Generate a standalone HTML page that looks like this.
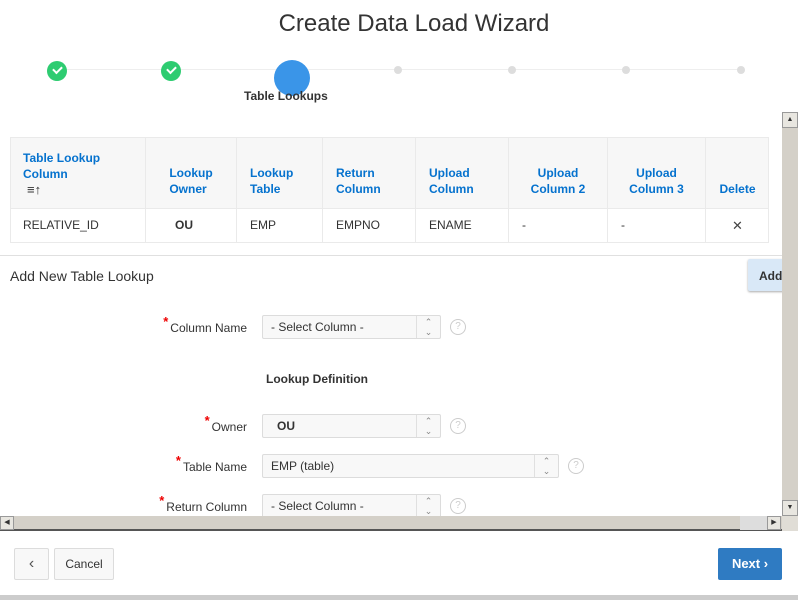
<!DOCTYPE html>
<html><head><style>
*{box-sizing:border-box;margin:0;padding:0}
body{width:798px;height:600px;position:relative;overflow:hidden;background:#fff;font-family:"Liberation Sans",sans-serif;font-size:12px;color:#333}
.a{position:absolute}
.dot{position:absolute;width:8px;height:8px;border-radius:50%;background:#ddd;top:66px}
.chk{position:absolute;width:20px;height:20px;border-radius:50%;background:#2ecc71;top:61px}
.chk:after{content:"";position:absolute;left:6px;top:5px;width:7px;height:4px;border-left:2px solid #fff;border-bottom:2px solid #fff;transform:rotate(-45deg)}
.th{position:absolute;top:137px;height:72px;color:#0572ce;font-weight:bold;font-size:12px;line-height:16px;border-right:1px solid #eaeaea;padding:0 13px;display:flex;align-items:flex-end;padding-bottom:12px}
.td{position:absolute;top:209px;height:33px;line-height:33px;border-right:1px solid #eaeaea;padding-left:13px;font-size:12px}
.lbl{position:absolute;font-size:12px;text-align:right;color:#333}
.lbl b{color:#e00;font-size:13px;position:relative;top:-6px;margin-right:2px}
.sel{position:absolute;height:24px;border:1px solid #dcdcdc;border-radius:2px;background:#f8f8f8;padding-left:8px;line-height:22px;font-size:12px}
.sel i{position:absolute;right:0;top:0;width:24px;height:22px;border-left:1px solid #e0e0e0;font-style:normal;color:#888;font-size:9px;text-align:center;line-height:10px;padding-top:1px}
.q{position:absolute;width:16px;height:16px;border:1px solid #ccc;border-radius:50%;color:#ccc;font-size:10px;text-align:center;line-height:14px}
</style></head><body>
<div class="a" style="left:0;width:798px;top:10px;text-align:center;font-size:24px;color:#333;padding-left:30px">Create Data Load Wizard</div>
<div class="a" style="left:57px;width:684px;top:69px;height:1px;background:#eee"></div>
<div class="chk" style="left:47px"></div>
<div class="chk" style="left:161px"></div>
<div class="a" style="left:274px;top:60px;width:36px;height:36px;border-radius:50%;background:#3a95e8"></div>
<div class="a" style="left:244px;top:89px;font-weight:bold;font-size:12px;color:#333">Table Lookups</div>
<div class="dot" style="left:394px"></div><div class="dot" style="left:508px"></div><div class="dot" style="left:622px"></div><div class="dot" style="left:737px"></div>

<div class="a" style="left:10px;top:137px;width:759px;height:72px;background:#f7f7f7;border:1px solid #eaeaea"></div>
<div class="a" style="left:10px;top:209px;width:759px;height:34px;border:1px solid #eaeaea;border-top:none"></div>
<div class="th" style="left:10px;width:136px;padding-bottom:0;align-items:flex-start;padding-top:13px;display:block">Table Lookup<br>Column<div style="color:#333;font-weight:normal;font-size:13px;padding-left:4px;line-height:16px">≡↑</div></div>
<div class="th" style="left:146px;width:91px;justify-content:center">Lookup<br>Owner</div>
<div class="th" style="left:237px;width:86px">Lookup<br>Table</div>
<div class="th" style="left:323px;width:93px">Return<br>Column</div>
<div class="th" style="left:416px;width:93px">Upload<br>Column</div>
<div class="th" style="left:509px;width:99px;justify-content:center;text-align:center">Upload<br>Column 2</div>
<div class="th" style="left:608px;width:98px;justify-content:center;text-align:center">Upload<br>Column 3</div>
<div class="th" style="left:706px;width:63px;justify-content:center;border:none">Delete</div>
<div class="td" style="left:10px;width:136px">RELATIVE_ID</div>
<div class="td" style="left:146px;width:91px;padding-left:29px;font-weight:bold">OU</div>
<div class="td" style="left:237px;width:86px">EMP</div>
<div class="td" style="left:323px;width:93px">EMPNO</div>
<div class="td" style="left:416px;width:93px">ENAME</div>
<div class="td" style="left:509px;width:99px">-</div>
<div class="td" style="left:608px;width:98px">-</div>
<div class="td" style="left:706px;width:63px;border:none;text-align:center;padding:0;font-size:13px;color:#444">✕</div>

<div class="a" style="left:0;top:255px;width:782px;height:1px;background:#e0e0e0"></div>
<div class="a" style="left:10px;top:268px;font-size:14px;color:#333">Add New Table Lookup</div>
<div class="a" style="left:748px;top:259px;width:40px;height:32px;background:#d9e8f7;border-radius:2px;font-weight:bold;padding:10px 0 0 11px;font-size:12px;box-shadow:0 1px 2px #aaa">Add</div>

<div class="lbl" style="left:100px;width:147px;top:320px"><b>*</b>Column Name</div>
<div class="sel" style="left:262px;top:315px;width:179px">- Select Column -<i>⌃<br>⌄</i></div>
<div class="q" style="left:450px;top:319px">?</div>
<div class="a" style="left:266px;top:372px;font-weight:bold;font-size:12px">Lookup Definition</div>
<div class="lbl" style="left:100px;width:147px;top:419px"><b>*</b>Owner</div>
<div class="sel" style="left:262px;top:414px;width:179px;font-weight:bold;padding-left:14px">OU<i style="font-weight:normal">⌃<br>⌄</i></div>
<div class="q" style="left:450px;top:418px">?</div>
<div class="lbl" style="left:100px;width:147px;top:459px"><b>*</b>Table Name</div>
<div class="sel" style="left:262px;top:454px;width:297px">EMP (table)<i>⌃<br>⌄</i></div>
<div class="q" style="left:568px;top:458px">?</div>
<div class="lbl" style="left:100px;width:147px;top:499px"><b>*</b>Return Column</div>
<div class="sel" style="left:262px;top:494px;width:179px">- Select Column -<i>⌃<br>⌄</i></div>
<div class="q" style="left:450px;top:498px">?</div>

<div class="a" style="left:782px;top:112px;width:16px;height:404px;background:#d4d0c8"></div>
<div class="a" style="left:782px;top:112px;width:16px;height:16px;background:#e8e6e0;border:1px solid #999;font-size:7px;text-align:center;line-height:14px">▲</div>
<div class="a" style="left:782px;top:500px;width:16px;height:16px;background:#e8e6e0;border:1px solid #999;font-size:7px;text-align:center;line-height:14px">▼</div>
<div class="a" style="left:0;top:516px;width:782px;height:15px;background:#d4d0c8;border-bottom:2px solid #555"></div>
<div class="a" style="left:0;top:516px;width:14px;height:14px;background:#e8e6e0;border:1px solid #999;font-size:7px;text-align:center;line-height:12px">◀</div>
<div class="a" style="left:740px;top:516px;width:28px;height:14px;background:#ddd"></div>
<div class="a" style="left:767px;top:516px;width:14px;height:14px;background:#e8e6e0;border:1px solid #999;font-size:7px;text-align:center;line-height:12px">▶</div>
<div class="a" style="left:782px;top:516px;width:16px;height:15px;background:#e0ddd6"></div>

<div class="a" style="left:14px;top:548px;width:35px;height:32px;border:1px solid #dcdcdc;border-radius:2px;background:#f8f8f8;text-align:center;line-height:30px;font-size:16px;color:#555">‹</div>
<div class="a" style="left:54px;top:548px;width:60px;height:32px;border:1px solid #dcdcdc;border-radius:2px;background:#f8f8f8;text-align:center;line-height:30px;font-size:12px">Cancel</div>
<div class="a" style="left:718px;top:548px;width:64px;height:32px;border-radius:2px;background:#2f7bc2;color:#fff;font-weight:bold;text-align:center;line-height:32px;font-size:13px">Next ›</div>
<div class="a" style="left:0;top:595px;width:798px;height:5px;background:#ccc"></div>
</body></html>
